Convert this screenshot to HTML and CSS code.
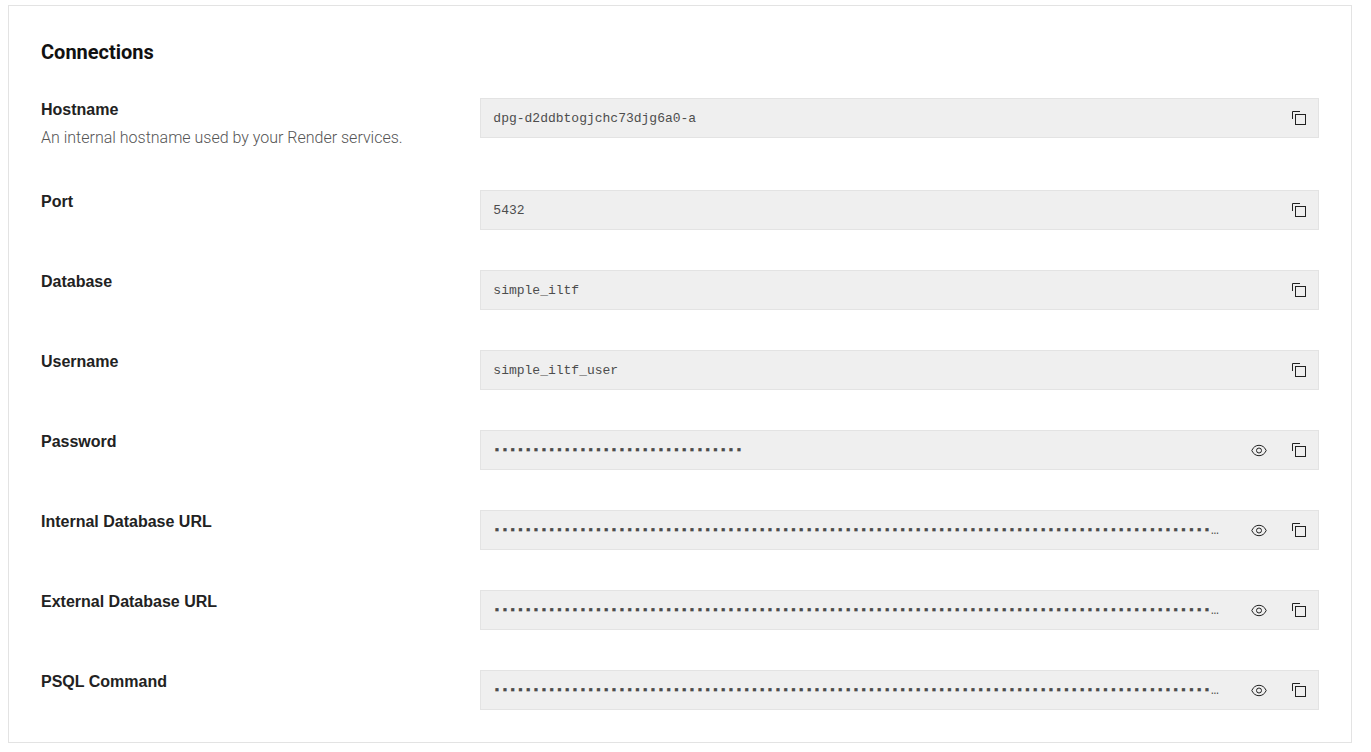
FILE: index.html
```html
<!DOCTYPE html>
<html lang="en">
<head>
    <meta charset="UTF-8">
    <meta name="viewport" content="width=device-width, initial-scale=1.0">
    <title>Connections</title>
    <link rel="stylesheet" href="styles.css">
</head>
<body>
    <!-- Shared icons -->
    <svg class="icon-defs" aria-hidden="true">
        <symbol id="icon-copy" viewBox="0 0 16 16">
            <path d="M9 1.5H1.5V9"/>
            <rect x="4.5" y="4.5" width="10" height="10"/>
        </symbol>
        <symbol id="icon-eye" viewBox="0 0 16 16">
            <path d="M.8 8.5C2.3 5 5 3.3 8 3.3s5.700 1.700 7.200 5.200c-1.500 3.500-4.200 5.200-7.200 5.200S2.300 12 .8 8.500z"/>
            <circle cx="8" cy="8.500" r="2.500"/>
        </symbol>
    </svg>

    <section class="card">
        <h2>Connections</h2>

        <div class="row">
            <div class="info">
                <label for="hostname">Hostname</label>
                <p id="hostname-help">An internal hostname used by your Render services.</p>
            </div>
            <div class="field">
                <input type="text" id="hostname" value="dpg-d2ddbtogjchc73djg6a0-a" aria-describedby="hostname-help" readonly>
                <button type="button" aria-label="Copy"><svg class="icon"><use href="#icon-copy"/></svg></button>
            </div>
        </div>

        <div class="row">
            <div class="info"><label for="port">Port</label></div>
            <div class="field">
                <input type="text" id="port" value="5432" readonly>
                <button type="button" aria-label="Copy"><svg class="icon"><use href="#icon-copy"/></svg></button>
            </div>
        </div>

        <div class="row">
            <div class="info"><label for="database">Database</label></div>
            <div class="field">
                <input type="text" id="database" value="simple_iltf" readonly>
                <button type="button" aria-label="Copy"><svg class="icon"><use href="#icon-copy"/></svg></button>
            </div>
        </div>

        <div class="row">
            <div class="info"><label for="username">Username</label></div>
            <div class="field">
                <input type="text" id="username" value="simple_iltf_user" readonly>
                <button type="button" aria-label="Copy"><svg class="icon"><use href="#icon-copy"/></svg></button>
            </div>
        </div>

        <div class="row">
            <div class="info"><label for="password">Password</label></div>
            <div class="field">
                <input type="text" id="password" value="▪▪▪▪▪▪▪▪▪▪▪▪▪▪▪▪▪▪▪▪▪▪▪▪▪▪▪▪▪▪▪▪" readonly>
                <button type="button" aria-label="Show"><svg class="icon"><use href="#icon-eye"/></svg></button>
                <button type="button" aria-label="Copy"><svg class="icon"><use href="#icon-copy"/></svg></button>
            </div>
        </div>

        <div class="row">
            <div class="info"><label for="internal-url">Internal Database URL</label></div>
            <div class="field">
                <input type="text" id="internal-url" value="▪▪▪▪▪▪▪▪▪▪▪▪▪▪▪▪▪▪▪▪▪▪▪▪▪▪▪▪▪▪▪▪▪▪▪▪▪▪▪▪▪▪▪▪▪▪▪▪▪▪▪▪▪▪▪▪▪▪▪▪▪▪▪▪▪▪▪▪▪▪▪▪▪▪▪▪▪▪▪▪▪▪▪▪▪▪▪▪▪▪▪▪▪▪▪▪▪▪▪▪▪▪▪▪▪▪▪▪▪▪" readonly>
                <button type="button" aria-label="Show"><svg class="icon"><use href="#icon-eye"/></svg></button>
                <button type="button" aria-label="Copy"><svg class="icon"><use href="#icon-copy"/></svg></button>
            </div>
        </div>

        <div class="row">
            <div class="info"><label for="external-url">External Database URL</label></div>
            <div class="field">
                <input type="text" id="external-url" value="▪▪▪▪▪▪▪▪▪▪▪▪▪▪▪▪▪▪▪▪▪▪▪▪▪▪▪▪▪▪▪▪▪▪▪▪▪▪▪▪▪▪▪▪▪▪▪▪▪▪▪▪▪▪▪▪▪▪▪▪▪▪▪▪▪▪▪▪▪▪▪▪▪▪▪▪▪▪▪▪▪▪▪▪▪▪▪▪▪▪▪▪▪▪▪▪▪▪▪▪▪▪▪▪▪▪▪▪▪▪" readonly>
                <button type="button" aria-label="Show"><svg class="icon"><use href="#icon-eye"/></svg></button>
                <button type="button" aria-label="Copy"><svg class="icon"><use href="#icon-copy"/></svg></button>
            </div>
        </div>

        <div class="row">
            <div class="info"><label for="psql">PSQL Command</label></div>
            <div class="field">
                <input type="text" id="psql" value="▪▪▪▪▪▪▪▪▪▪▪▪▪▪▪▪▪▪▪▪▪▪▪▪▪▪▪▪▪▪▪▪▪▪▪▪▪▪▪▪▪▪▪▪▪▪▪▪▪▪▪▪▪▪▪▪▪▪▪▪▪▪▪▪▪▪▪▪▪▪▪▪▪▪▪▪▪▪▪▪▪▪▪▪▪▪▪▪▪▪▪▪▪▪▪▪▪▪▪▪▪▪▪▪▪▪▪▪▪▪" readonly>
                <button type="button" aria-label="Show"><svg class="icon"><use href="#icon-eye"/></svg></button>
                <button type="button" aria-label="Copy"><svg class="icon"><use href="#icon-copy"/></svg></button>
            </div>
        </div>
    </section>
</body>
</html>
```

FILE: styles.css
```css
* {
    box-sizing: border-box;
}
body {
    margin: 5px 19px 8px 8px;
    background-color: #fff;
    color: #222;
    font-family: Roboto, "Liberation Sans", Arial, sans-serif;
    font-size: 16px;
    line-height: 24px;
}
.icon-defs {
    display: none;
}
.card {
    display: grid;
    gap: 40px;
    padding: 32px;
    border: 1px solid #e3e3e3;
}
h2 {
    margin: 0 0 -8px;
    color: #111;
    font-size: 20px;
    font-weight: 700;
    line-height: 28px;
}
.row {
    display: grid;
    grid-template-columns: 1fr 2fr;
    column-gap: 20px;
    align-items: start;
}
.info label {
    display: block;
    font-family: "Liberation Sans", Arial, sans-serif;
    font-weight: 600;
}
.info p {
    margin: 4px 0 0;
    color: #555;
    font-weight: 300;
}
.field {
    display: flex;
    height: 40px;
    background-color: #efefef;
    box-shadow: inset 0 0 0 1px #e3e3e3;
}
.field input {
    flex: 1;
    min-width: 0;
    padding: 0 16px 0 13px;
    border: none;
    background: none;
    color: #4d4d4d;
    font-family: "Liberation Mono", "Courier New", monospace;
    font-size: 13px;
    text-overflow: ellipsis;
}
.field button {
    display: flex;
    align-items: center;
    justify-content: center;
    width: 40px;
    padding: 0;
    border: none;
    background: none;
    color: #222;
    cursor: pointer;
}
.icon {
    width: 16px;
    height: 16px;
    fill: none;
    stroke: currentColor;
}
/* Mobile */
@media (max-width: 600px) {
    .row {
        grid-template-columns: 1fr;
        row-gap: 8px;
    }
}
```
